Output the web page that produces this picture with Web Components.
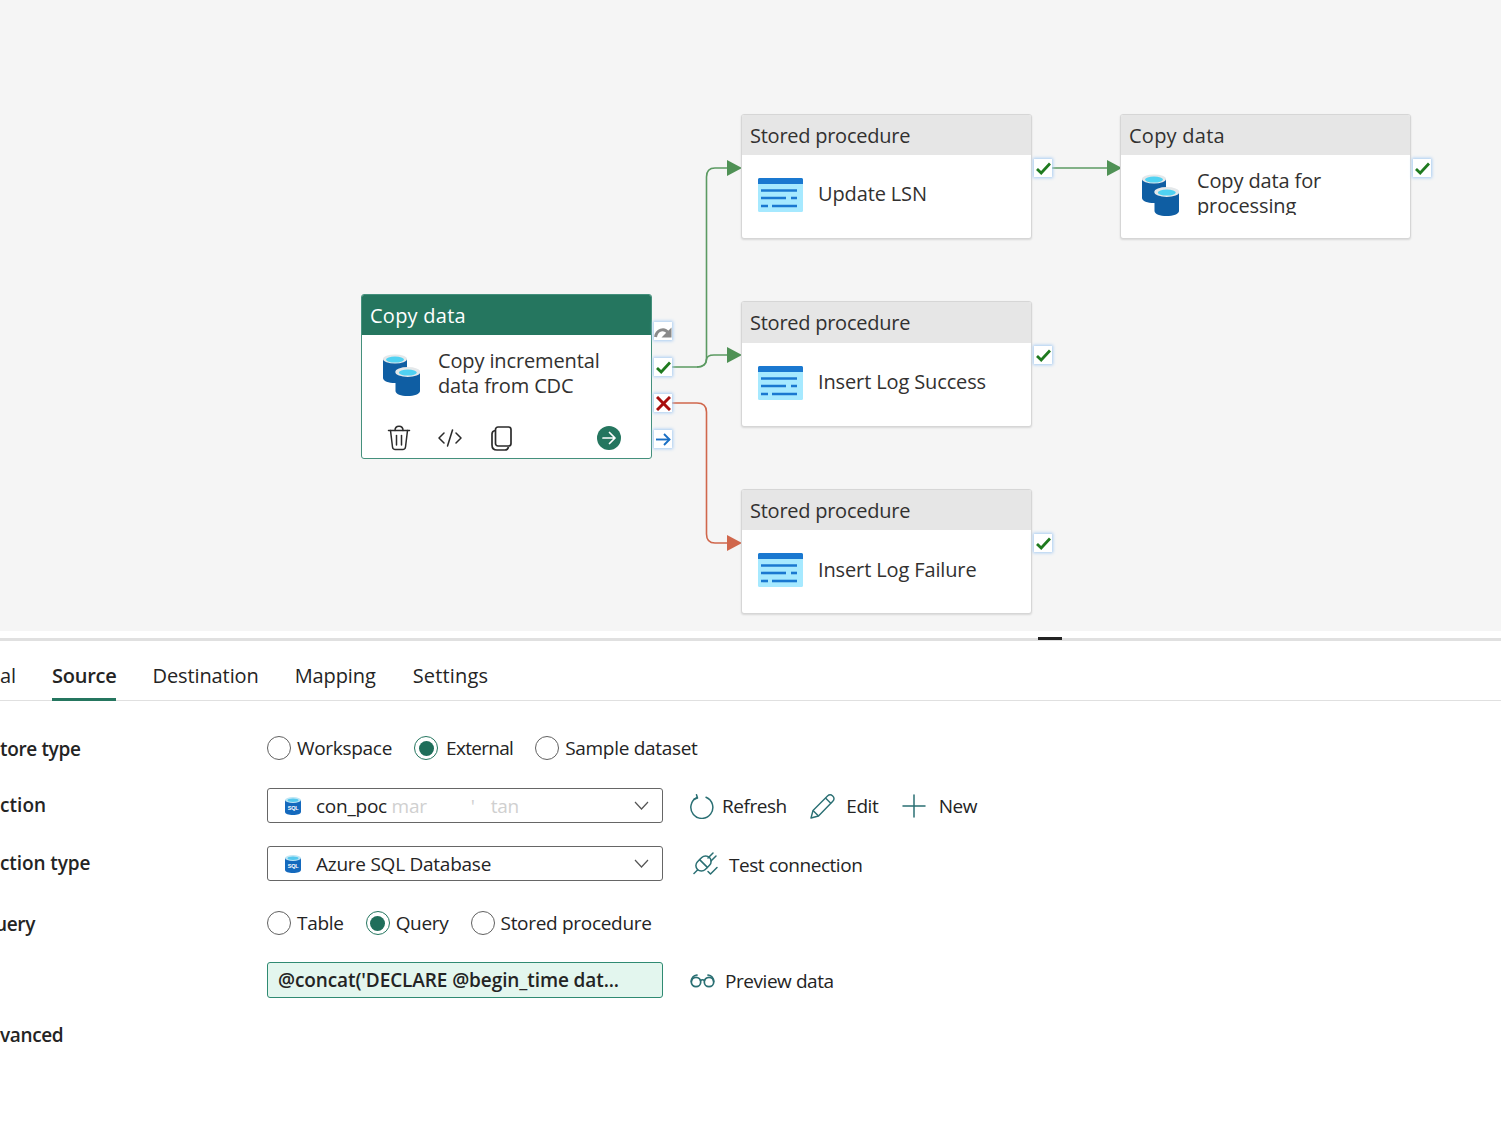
<!DOCTYPE html>
<html lang="en">
<head>
<meta charset="utf-8">
<title>Copy data pipeline</title>
<style>
  html, body { margin: 0; padding: 0; background: #fff; }
  body {
    width: 1501px; height: 1129px; overflow: hidden;
    font-family: "Open Sans", "Noto Sans", "Liberation Sans", sans-serif;
    color: #242424;
  }
</style>
</head>
<body>
<pipeline-editor></pipeline-editor>

<script>
const ICONS = {
  db: `<svg width="37" height="42" viewBox="0 0 37 42">
    <path d="M0 5V24C0 27 5.500 29 12 29S24 27 24 24V5Z" fill="#0f5ea3"/>
    <ellipse cx="12" cy="5" rx="12" ry="4.600" fill="#e4e8ea"/>
    <ellipse cx="12" cy="5.600" rx="9" ry="3" fill="#50d2f2"/>
    <path d="M12.500 18V37C12.500 40 18 42 24.500 42S37 40 37 37V18Z" fill="#0f5ea3"/>
    <ellipse cx="24.800" cy="18" rx="12.500" ry="5" fill="#e4e8ea"/>
    <ellipse cx="24.800" cy="18.600" rx="9" ry="3" fill="#50d2f2"/>
  </svg>`,
  sp: `<svg width="45" height="34" viewBox="0 0 45 34">
    <rect width="45" height="34" rx="1.500" fill="#a6e9ff"/>
    <path d="M1.500 0H43.500A1.500 1.500 0 0 1 45 1.500V6H0V1.500A1.500 1.500 0 0 1 1.500 0Z" fill="#1a78d0"/>
    <g stroke="#1a78d0" stroke-width="2.600">
      <path d="M3 12.500H39"/><path d="M3 20H28"/><path d="M33 20H39"/>
      <path d="M3 28H10"/><path d="M14 28H39"/>
    </g>
  </svg>`,
  trash: `<svg width="24" height="26" viewBox="0 0 24 26" fill="none" stroke="#2b2b2b" stroke-width="1.500" stroke-linecap="round" stroke-linejoin="round">
    <path d="M1.500 5.500H22.500"/><path d="M8 5.500C8 3 9.700 1.200 12 1.200S16 3 16 5.500"/>
    <path d="M3.500 5.500L5.500 22C5.700 23.600 6.800 24.500 8.300 24.500H15.700C17.200 24.500 18.300 23.600 18.500 22L20.500 5.500"/>
    <path d="M9.500 10.500V20"/><path d="M14.500 10.500V20"/>
  </svg>`,
  code: `<svg width="24" height="20" viewBox="0 0 24 20" fill="none" stroke="#2b2b2b" stroke-width="1.500" stroke-linecap="round" stroke-linejoin="round">
    <path d="M6 5L1 10L6 15"/><path d="M18 5L23 10L18 15"/><path d="M14.500 2L9.500 18"/>
  </svg>`,
  copy: `<svg width="21" height="25" viewBox="0 0 21 25" fill="none" stroke="#2b2b2b" stroke-width="1.700" stroke-linejoin="round">
    <rect x="4.500" y="1" width="15.500" height="19" rx="2.500"/>
    <path d="M4.500 4.500C2.200 4.800 1 6 1 8V19C1 22 3 24 6 24H14C15.800 24 17 23 17.500 21"/>
  </svg>`,
  go: `<svg width="24" height="24" viewBox="0 0 24 24">
    <circle cx="12" cy="12" r="12" fill="#25765f"/>
    <path d="M6 12H18M12.500 6.500L18 12L12.500 17.500" fill="none" stroke="#fff" stroke-width="1.700" stroke-linecap="round" stroke-linejoin="round"/>
  </svg>`,
  sql: `<svg width="16" height="18" viewBox="0 0 16 18">
    <path d="M0 3V15C0 16.700 3.600 18 8 18S16 16.700 16 15V3Z" fill="#1469bd"/>
    <ellipse cx="8" cy="3" rx="8" ry="3" fill="#bfe6f5"/>
    <ellipse cx="8" cy="3.300" rx="5.500" ry="1.700" fill="#55c8ee"/>
    <text x="8" y="12.500" font-size="5.500" font-weight="700" fill="#fff" text-anchor="middle" font-family="Liberation Sans, sans-serif">SQL</text>
  </svg>`,
  refresh: `<svg width="25" height="25" viewBox="0 0 25 25" fill="none" stroke="#2a6f73" stroke-width="1.500" stroke-linecap="round" stroke-linejoin="round">
    <path d="M8 3.500A11 11 0 1 0 17 3.200"/><path d="M7.500 0.800L8.500 4L5 5.200"/>
  </svg>`,
  edit: `<svg width="25" height="25" viewBox="0 0 25 25" fill="none" stroke="#2a6f73" stroke-width="1.400" stroke-linejoin="round">
    <path d="M1 24L3 16.500L17.500 2C19 .6 21.200 .6 22.700 2C24.200 3.500 24.200 5.700 22.800 7.200L8.500 22Z"/>
    <path d="M15.500 4L21 9.500"/><path d="M3 16.500L8.500 22"/>
  </svg>`,
  plus: `<svg width="24" height="24" viewBox="0 0 24 24" fill="none" stroke="#2a6f73" stroke-width="1.500" stroke-linecap="round">
    <path d="M12 1V23"/><path d="M1 12H23"/>
  </svg>`,
  plug: `<svg width="26" height="25" viewBox="0 0 26 25" fill="none" stroke="#2a6f73" stroke-width="1.500" stroke-linecap="round" stroke-linejoin="round">
    <g transform="rotate(-45 10.500 11.500)"><rect x="2" y="6" width="17" height="11" rx="5.500"/><path d="M10.500 6V17"/></g>
    <path d="M15 6L20 1"/><path d="M18 9L23 4"/><path d="M4.500 18L1 21.500"/>
    <path d="M15 19.500L17.500 22L24 15.500"/>
  </svg>`,
  glasses: `<svg width="25" height="15" viewBox="0 0 25 15" fill="none" stroke="#2a6f73" stroke-width="1.700" stroke-linecap="round">
    <circle cx="6" cy="9" r="4.700"/><circle cx="19" cy="9" r="4.700"/>
    <path d="M10.500 7.500C11.500 6.600 13.500 6.600 14.500 7.500"/><path d="M1.300 8.500C1.500 5 3.500 2.500 7 2"/><path d="M23.700 8.500C23.500 5 21.500 2.500 18 2"/>
  </svg>`,
  skip: `<svg width="18" height="13" viewBox="0 0 18 13">
    <path d="M1.500 12C2.500 5 10 2 14.500 8" fill="none" stroke="#8a8a8a" stroke-width="3"/>
    <path d="M17.500 2.500V12.500H7.500Z" fill="#8a8a8a"/>
  </svg>`,
  ok: `<svg width="15" height="13" viewBox="0 0 15 13" fill="none" stroke="#1f7a1f" stroke-width="2.800">
    <path d="M1 7L5.200 11L14 1.500"/>
  </svg>`,
  fail: `<svg width="15" height="15" viewBox="0 0 15 15" fill="none" stroke="#a80f0f" stroke-width="3">
    <path d="M1 1L14 14"/><path d="M14 1L1 14"/>
  </svg>`,
  next: `<svg width="15" height="13" viewBox="0 0 15 13" fill="none" stroke="#1a6fc4" stroke-width="1.900">
    <path d="M0 6.500H13.500"/><path d="M8 1L13.500 6.500L8 12"/>
  </svg>`,
};

class PortBadge extends HTMLElement {
  connectedCallback() {
    if (this.shadowRoot) return;
    this.attachShadow({ mode: 'open' });
    this.shadowRoot.innerHTML = `
      <style>
        :host {
          display: flex; width: 18px; height: 18px;
          align-items: center; justify-content: center;
          background: #fff;
          box-shadow: 0 0 3px 1px #a9cdf3;
        }
        svg { display: block; }
      </style>
      ${ICONS[this.getAttribute('kind')] || ''}
    `;
  }
}
customElements.define('port-badge', PortBadge);

class PipelineNode extends HTMLElement {
  connectedCallback() {
    if (this.shadowRoot) return;
    const selected = this.hasAttribute('selected');
    const iconName = this.getAttribute('icon');
    this.attachShadow({ mode: 'open' });
    this.shadowRoot.innerHTML = `
      <style>
        :host {
          position: absolute; display: block;
          left: ${this.getAttribute('x')}px; top: ${this.getAttribute('y')}px;
          width: 291px; box-sizing: border-box;
        }
        .card {
          box-sizing: border-box; height: ${this.getAttribute('h')}px;
          display: flex; flex-direction: column;
          background: #fff; border-radius: 3px; overflow: hidden;
          border: ${selected ? '1.5px solid #44907c' : '1px solid #d6d6d6'};
          box-shadow: ${selected ? 'none' : '0 1px 2px rgba(0,0,0,.12)'};
        }
        header {
          height: ${this.getAttribute('head') || 40}px; flex: none; box-sizing: border-box; padding: 0 8px;
          display: flex; align-items: center;
          font-size: 20px; letter-spacing: ${this.getAttribute('track') || '-0.25px'};
          background: ${selected ? '#25765f' : '#e6e6e6'};
          color: ${selected ? '#fff' : '#323130'};
        }
        .body {
          height: 76px; flex: none; display: flex; align-items: center;
          padding-left: ${iconName === 'db' ? 21 : 16}px;
          gap: ${iconName === 'db' ? 18 : 15}px;
        }
        .icon { display: flex; flex: none; margin-top: 4px; }
        .name {
          font-size: 20px; letter-spacing: -0.13px;
          line-height: 25px; max-height: 47px; overflow: hidden; color: #323130;
          width: 190px; margin-top: var(--name-shift, 0);
        }
        .ports {
          position: absolute; left: 293px; top: var(--ports-top, 45px);
          display: flex; flex-direction: column; gap: 18px;
        }
      </style>
      <div class="card">
        <header>${this.getAttribute('type')}</header>
        <div class="body">
          <span class="icon">${ICONS[iconName]}</span>
          <div class="name"><slot></slot></div>
        </div>
        <slot name="tools"></slot>
      </div>
      <div class="ports"><slot name="ports"></slot></div>
    `;
  }
}
customElements.define('pipeline-node', PipelineNode);

class NodeTools extends HTMLElement {
  connectedCallback() {
    if (this.shadowRoot) return;
    this.attachShadow({ mode: 'open' });
    this.shadowRoot.innerHTML = `
      <style>
        :host { display: flex; align-items: center; height: 26px; margin-top: 14px; padding-left: 25px; }
        span { display: flex; }
        .code { margin-left: 27px; }
        .copy { margin-left: 29px; }
        .go { margin-left: 85px; }
      </style>
      <span>${ICONS.trash}</span>
      <span class="code">${ICONS.code}</span>
      <span class="copy">${ICONS.copy}</span>
      <span class="go">${ICONS.go}</span>
    `;
  }
}
customElements.define('node-tools', NodeTools);

class PipelineCanvas extends HTMLElement {
  connectedCallback() {
    if (this.shadowRoot) return;
    this.attachShadow({ mode: 'open' });
    this.shadowRoot.innerHTML = `
      <style>
        :host {
          display: block; position: relative; height: 631px; overflow: hidden;
          background: #f5f5f5;
        }
        svg { position: absolute; left: 0; top: 0; }
      </style>
      <svg width="1501" height="631" fill="none" stroke-width="1.600">
        <g stroke="#5b9a62">
          <path d="M672 367H697C703 367 706.500 364 706.500 358V177C706.500 171 709 168 715 168H728"/>
          <path d="M697 367C703 367 706.500 364 706.500 360C706.500 357 709 355 714 355H728"/>
          <path d="M1052 168H1108"/>
        </g>
        <path d="M672 403H697C703 403 706.500 406 706.500 412V534C706.500 540 709 543 715 543H728" stroke="#d0674c"/>
        <g fill="#4f9155" stroke="none">
          <path d="M727 160L742 168L727 176Z"/>
          <path d="M727 347L742 355L727 363Z"/>
          <path d="M1107 160L1122 168L1107 176Z"/>
        </g>
        <path d="M727 535L742 543L727 551Z" fill="#d0674c"/>
      </svg>
      <slot></slot>
    `;
  }
}
customElements.define('pipeline-canvas', PipelineCanvas);

class PaneSplitter extends HTMLElement {
  connectedCallback() {
    if (this.shadowRoot) return;
    this.attachShadow({ mode: 'open' });
    this.shadowRoot.innerHTML = `
      <style>
        :host { display: block; position: relative; height: 10px; box-sizing: border-box; border-bottom: 3px solid #e0e0e0; background: #fff; }
        i { position: absolute; left: 1038px; top: 6px; width: 24px; height: 3px; background: #242424; }
      </style>
      <i></i>
    `;
  }
}
customElements.define('pane-splitter', PaneSplitter);

class TabBar extends HTMLElement {
  connectedCallback() {
    if (this.shadowRoot) return;
    this.attachShadow({ mode: 'open' });
    const tabs = [['al', ''], ['Source', 'on'], ['Destination', ''], ['Mapping', ''], ['Settings', '']];
    this.shadowRoot.innerHTML = `
      <style>
        :host {
          display: flex; height: 60px; box-sizing: border-box; gap: 36px;
          border-bottom: 1px solid #e0e0e0;
          font-size: 20px; letter-spacing: -0.1px; color: #242424;
        }
        span { display: flex; align-items: center; height: 59px; padding-top: 9px; box-sizing: border-box; position: relative; }
        span.on { font-weight: 600; letter-spacing: -0.25px; }
        span.on::after { content: ''; position: absolute; left: 0; right: 0; bottom: -1px; height: 3px; background: #25765f; }
        span:last-child { letter-spacing: 0.15px; margin-left: 1px; }
      </style>
      ${tabs.map(([t, c]) => `<span class="${c}">${t}</span>`).join('')}
    `;
  }
}
customElements.define('tab-bar', TabBar);

class RadioOption extends HTMLElement {
  connectedCallback() {
    if (this.shadowRoot) return;
    this.attachShadow({ mode: 'open' });
    const on = this.hasAttribute('checked');
    this.shadowRoot.innerHTML = `
      <style>
        :host { display: inline-flex; align-items: center; gap: 6px; font-size: 19px; letter-spacing: -0.3px; color: #242424; }
        i {
          width: 24px; height: 24px; box-sizing: border-box; border-radius: 50%;
          border: 1px solid ${on ? '#25765f' : '#616161'}; background: #fff;
          display: flex; align-items: center; justify-content: center;
        }
        b { width: 15px; height: 15px; border-radius: 50%; background: #1f6e5a; }
      </style>
      <i>${on ? '<b></b>' : ''}</i><slot></slot>
    `;
  }
}
customElements.define('radio-option', RadioOption);

class SelectBox extends HTMLElement {
  connectedCallback() {
    if (this.shadowRoot) return;
    this.attachShadow({ mode: 'open' });
    this.shadowRoot.innerHTML = `
      <style>
        :host {
          display: flex; align-items: center; box-sizing: border-box;
          width: 396px; height: 35px; margin-bottom: 1px; padding: 0 13px 0 17px; gap: 15px;
          border: 1px solid #666; border-radius: 3px; background: #fff;
          font-size: 19px; letter-spacing: -0.25px; color: #242424;
        }
        .label { flex: 1; white-space: nowrap; overflow: hidden; padding-top: 1px; }
        svg { display: block; flex: none; }
      </style>
      ${ICONS.sql}
      <span class="label"><slot></slot></span>
      <svg width="15" height="9" viewBox="0 0 15 9" fill="none" stroke="#555" stroke-width="1.200"><path d="M1 1L7.500 8L14 1"/></svg>
    `;
  }
}
customElements.define('select-box', SelectBox);

class ActionLink extends HTMLElement {
  connectedCallback() {
    if (this.shadowRoot) return;
    this.attachShadow({ mode: 'open' });
    this.shadowRoot.innerHTML = `
      <style>
        :host {
          display: inline-flex; align-items: center;
          gap: ${this.getAttribute('gap') || 8}px;
          font-size: 19px; letter-spacing: -0.45px; color: #242424;
        }
        svg { display: block; }
        span { padding-top: var(--text-drop, 0); }
      </style>
      ${ICONS[this.getAttribute('icon')]}<span><slot></slot></span>
    `;
  }
}
customElements.define('action-link', ActionLink);

class SourceForm extends HTMLElement {
  connectedCallback() {
    if (this.shadowRoot) return;
    this.attachShadow({ mode: 'open' });
    this.shadowRoot.innerHTML = `
      <style>
        :host {
          display: grid; grid-template-columns: 267px 1fr;
          grid-template-rows: 58px 58px 59px 57px 55px 36px;
          padding-top: 29px;
        }
        .lbl, .row { height: 36px; display: flex; align-items: center; box-sizing: border-box; }
        .lbl { font-size: 19px; font-weight: 600; letter-spacing: -0.35px; color: #242424; }
        .down { padding-top: 2px; }
        .up { padding-bottom: 2px; }
        .radios { gap: 22px; }
        .actions { display: flex; align-items: center; margin-left: 26px; gap: 23.500px; }
        .expr {
          box-sizing: border-box; width: 396px; height: 36px; padding: 0 10px;
          display: flex; align-items: center; white-space: nowrap;
          background: #e3f6ee; border: 1px solid #2f8a72; border-radius: 3px;
          font-size: 19px; font-weight: 600; letter-spacing: -0.1px; color: #242424;
        }
        .ghost { color: #d0d0d0; }
      </style>
      <div class="lbl down">tore type</div>
      <div class="row radios">
        <radio-option>Workspace</radio-option>
        <radio-option checked style="gap:8px;letter-spacing:-.7px">External</radio-option>
        <radio-option>Sample dataset</radio-option>
      </div>

      <div class="lbl up" style="letter-spacing:.05px">ction</div>
      <div class="row">
        <select-box>con_poc <span class="ghost">mar</span><span class="ghost" style="margin-left:44px">'</span><span class="ghost" style="margin-left:16px">tan</span></select-box>
        <div class="actions">
          <action-link icon="refresh">Refresh</action-link>
          <action-link icon="edit" gap="11">Edit</action-link>
          <action-link icon="plus" gap="13">New</action-link>
        </div>
      </div>

      <div class="lbl up" style="letter-spacing:-.1px">ction type</div>
      <div class="row">
        <select-box>Azure SQL Database</select-box>
        <div class="actions" style="margin-left:30px;--text-drop:2px">
          <action-link icon="plug" gap="10">Test connection</action-link>
        </div>
      </div>

      <div class="lbl down" style="margin-left:-5px">uery</div>
      <div class="row radios">
        <radio-option>Table</radio-option>
        <radio-option checked>Query</radio-option>
        <radio-option>Stored procedure</radio-option>
      </div>

      <div></div>
      <div class="row">
        <div class="expr">@concat('DECLARE @begin_time dat...</div>
        <div class="actions" style="margin-left:27px;--text-drop:2px">
          <action-link icon="glasses" gap="10">Preview data</action-link>
        </div>
      </div>

      <div class="lbl">vanced</div>
      <div></div>
    `;
  }
}
customElements.define('source-form', SourceForm);

class PipelineEditor extends HTMLElement {
  connectedCallback() {
    if (this.shadowRoot) return;
    this.attachShadow({ mode: 'open' });
    this.shadowRoot.innerHTML = `
      <style>:host { display: block; width: 1501px; height: 1129px; background: #fff; }</style>
      <pipeline-canvas>
        <pipeline-node x="361" y="294" h="165" type="Copy data" icon="db" track="0.25px" selected style="--ports-top:28px;--name-shift:-3px">
          Copy incremental data from CDC
          <node-tools slot="tools"></node-tools>
          <port-badge slot="ports" kind="skip"></port-badge>
          <port-badge slot="ports" kind="ok"></port-badge>
          <port-badge slot="ports" kind="fail"></port-badge>
          <port-badge slot="ports" kind="next"></port-badge>
        </pipeline-node>
        <pipeline-node x="741" y="114" h="125" type="Stored procedure" icon="sp">
          Update LSN
          <port-badge slot="ports" kind="ok"></port-badge>
        </pipeline-node>
        <pipeline-node x="1120" y="114" h="125" type="Copy data" icon="db" track="0.25px" style="--name-shift:-3px">
          Copy data for processing
          <port-badge slot="ports" kind="ok"></port-badge>
        </pipeline-node>
        <pipeline-node x="741" y="301" h="126" head="41" type="Stored procedure" icon="sp">
          Insert Log Success
          <port-badge slot="ports" kind="ok"></port-badge>
        </pipeline-node>
        <pipeline-node x="741" y="489" h="125" type="Stored procedure" icon="sp" style="--name-shift:2px">
          Insert Log Failure
          <port-badge slot="ports" kind="ok"></port-badge>
        </pipeline-node>
      </pipeline-canvas>
      <pane-splitter></pane-splitter>
      <tab-bar></tab-bar>
      <source-form></source-form>
    `;
  }
}
customElements.define('pipeline-editor', PipelineEditor);
</script>
</body>
</html>
